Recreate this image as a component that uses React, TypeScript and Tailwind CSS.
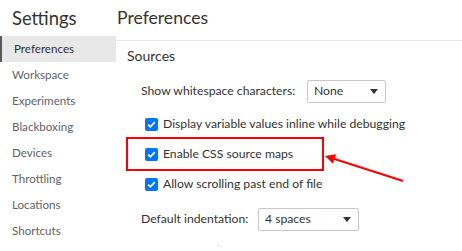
const font = { fontFamily: 'Lato, "Open Sans", sans-serif' }

const items = ['Preferences', 'Workspace', 'Experiments', 'Blackboxing', 'Devices', 'Throttling', 'Locations', 'Shortcuts']

function Check({ label }: { label: string }) {
  return (
    <div className="flex items-center h-[30px]">
      <div className="w-[13px] h-[13px] rounded-[2px] bg-[#0075ff] flex items-center justify-center">
        <svg width="11" height="11" viewBox="0 0 11 11">
          <path d="M2.2 5.6 L4.4 7.8 L8.8 3.2" stroke="#fff" strokeWidth="1.8" fill="none" />
        </svg>
      </div>
      <span className="ml-[5px] text-[12.2px] text-[#333] whitespace-nowrap">{label}</span>
    </div>
  )
}

function Select({ value, w }: { value: string; w: string }) {
  return (
    <div className={`${w} h-[23px] border border-[#c8c8c8] rounded-[2px] flex items-center justify-between pl-[6px] pr-[7px] text-[12.2px] text-[#333]`}>
      <span>{value}</span>
      <svg width="8" height="5" viewBox="0 0 8 5"><path d="M0 0 L8 0 L4 5 Z" fill="#333" /></svg>
    </div>
  )
}

export default function App() {
  return (
    <div className="w-[462px] h-[251px] bg-white flex overflow-hidden relative" style={font}>
      <div className="w-[116px] shrink-0">
        <div className="h-[36px] pl-[12px] pt-[5px] text-[18.4px] text-[#333] leading-[26px]">Settings</div>
        {items.map((it, i) => (
          <div key={it}
            className={`h-[26px] flex items-center pl-[12px] text-[11.6px] ${i === 0 ? 'bg-[#e8e8e8] border-l-2 border-[#5a5a5a] pl-[10px] text-[#333]' : 'text-[#5f6368]'}`}>
            {it}
          </div>
        ))}
      </div>
      <div className="flex-1">
        <div className="h-[41px] border-b border-[#e6e6e6] pl-[1px] pt-[5px] text-[17.6px] text-[#333] leading-[26px]">Preferences</div>
        <div className="pl-[11px] pt-[5px] text-[14px] text-[#333] leading-[20px]">Sources</div>
        <div className="pl-[25px] pt-[13px]">
          <div className="flex items-center h-[24px]">
            <span className="text-[12.2px] text-[#333] w-[166px] whitespace-nowrap">Show whitespace characters:</span>
            <Select value="None" w="w-[79px]" />
          </div>
          <div className="pt-[6px] pl-[4px]">
            <Check label="Display variable values inline while debugging" />
            <Check label="Enable CSS source maps" />
            <Check label="Allow scrolling past end of file" />
          </div>
          <div className="flex items-center h-[24px] mt-[8px]">
            <span className="text-[12.2px] text-[#333] w-[117px] whitespace-nowrap">Default indentation:</span>
            <Select value="4 spaces" w="w-[101px]" />
          </div>
        </div>
      </div>
      <div className="absolute left-[126px] top-[137px] w-[198px] h-[34px] border-2 border-[#f00]" />
      <svg className="absolute left-0 top-0" width="462" height="251">
        <line x1="403" y1="181" x2="333" y2="158.5" stroke="#f00" strokeWidth="2" />
        <path d="M325 156 L336 154.2 L333 163.8 Z" fill="#f00" />
      </svg>
      <div className="absolute left-[218px] top-[245px] w-[1px] h-[1px] bg-[#bbb]" />
    </div>
  )
}
